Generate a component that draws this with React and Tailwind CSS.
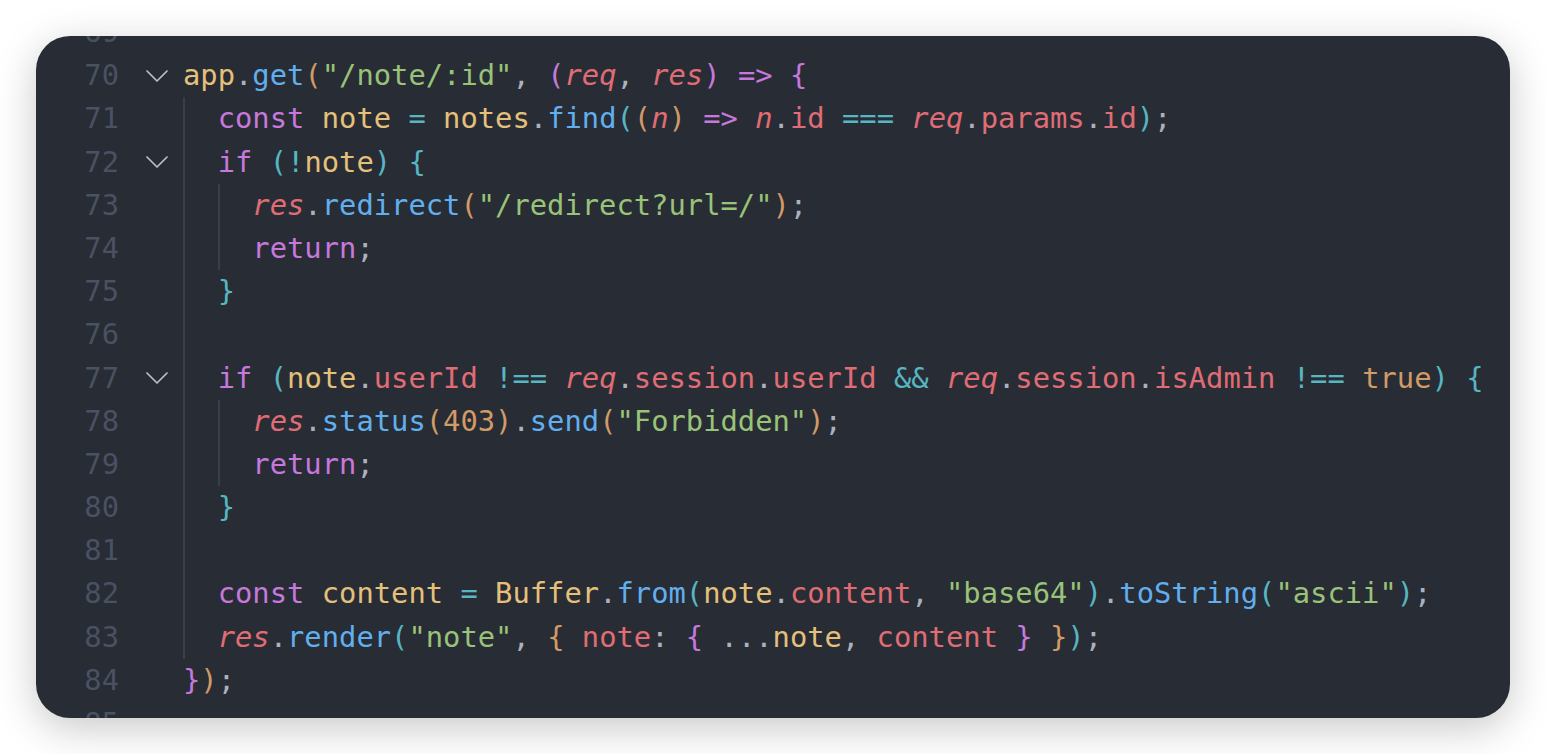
const C = {
    y: "text-[#e5c07b]",
    b: "text-[#61afef]",
    g: "text-[#98c379]",
    r: "text-[#e06c75]",
    p: "text-[#c678dd]",
    c: "text-[#56b6c2]",
    o: "text-[#d19a66]",
    w: "text-[#abb2bf]",
    i: "text-[#e06c75] italic",
};

const S = [" ", "w"];

const lines = [
    { n: 69, level: 0, tokens: [] },
    {
        n: 70,
        fold: true,
        level: 0,
        tokens: [
            ["app", "y"], [".", "w"], ["get", "b"], ["(", "o"], ['"/note/:id"', "g"], [", ", "w"],
            ["(", "p"], ["req", "i"], [", ", "w"], ["res", "i"], [")", "p"], S, ["=>", "p"], S, ["{", "p"],
        ],
    },
    {
        n: 71,
        level: 1,
        tokens: [
            ["const", "p"], S, ["note", "y"], S, ["=", "c"], S, ["notes", "y"], [".", "w"], ["find", "b"],
            ["(", "c"], ["(", "o"], ["n", "i"], [")", "o"], S, ["=>", "p"], S, ["n", "i"], [".", "w"],
            ["id", "r"], S, ["===", "c"], S, ["req", "i"], [".", "w"], ["params", "r"], [".", "w"],
            ["id", "r"], [")", "c"], [";", "w"],
        ],
    },
    {
        n: 72,
        fold: true,
        level: 1,
        tokens: [["if", "p"], S, ["(", "c"], ["!", "c"], ["note", "y"], [")", "c"], S, ["{", "c"]],
    },
    {
        n: 73,
        level: 2,
        tokens: [["res", "i"], [".", "w"], ["redirect", "b"], ["(", "o"], ['"/redirect?url=/"', "g"], [")", "o"], [";", "w"]],
    },
    { n: 74, level: 2, tokens: [["return", "p"], [";", "w"]] },
    { n: 75, level: 1, tokens: [["}", "c"]] },
    { n: 76, level: 1, tokens: [] },
    {
        n: 77,
        fold: true,
        level: 1,
        tokens: [
            ["if", "p"], S, ["(", "c"], ["note", "y"], [".", "w"], ["userId", "r"], S, ["!==", "c"], S,
            ["req", "i"], [".", "w"], ["session", "r"], [".", "w"], ["userId", "r"], S, ["&&", "c"], S,
            ["req", "i"], [".", "w"], ["session", "r"], [".", "w"], ["isAdmin", "r"], S, ["!==", "c"], S,
            ["true", "o"], [")", "c"], S, ["{", "c"],
        ],
    },
    {
        n: 78,
        level: 2,
        tokens: [
            ["res", "i"], [".", "w"], ["status", "b"], ["(", "o"], ["403", "o"], [")", "o"], [".", "w"],
            ["send", "b"], ["(", "o"], ['"Forbidden"', "g"], [")", "o"], [";", "w"],
        ],
    },
    { n: 79, level: 2, tokens: [["return", "p"], [";", "w"]] },
    { n: 80, level: 1, tokens: [["}", "c"]] },
    { n: 81, level: 1, tokens: [] },
    {
        n: 82,
        level: 1,
        tokens: [
            ["const", "p"], S, ["content", "y"], S, ["=", "c"], S, ["Buffer", "y"], [".", "w"], ["from", "b"],
            ["(", "c"], ["note", "y"], [".", "w"], ["content", "r"], [", ", "w"], ['"base64"', "g"], [")", "c"],
            [".", "w"], ["toString", "b"], ["(", "c"], ['"ascii"', "g"], [")", "c"], [";", "w"],
        ],
    },
    {
        n: 83,
        level: 1,
        tokens: [
            ["res", "i"], [".", "w"], ["render", "b"], ["(", "c"], ['"note"', "g"], [", ", "w"], ["{", "o"], S,
            ["note", "r"], [":", "w"], S, ["{", "p"], S, ["...", "w"], ["note", "y"], [", ", "w"],
            ["content", "r"], S, ["}", "p"], S, ["}", "o"], [")", "c"], [";", "w"],
        ],
    },
    { n: 84, level: 0, tokens: [["}", "p"], [")", "o"], [";", "w"]] },
    { n: 85, level: 0, tokens: [] },
];

const Chevron = () => (
    <svg width="24" height="14" viewBox="0 0 24 14" fill="none">
        <polyline
            points="2,2 12,12 22,2"
            stroke="#b9bec7"
            strokeWidth="1.7"
            strokeLinecap="round"
            strokeLinejoin="round"
        />
    </svg>
);

const CodeLine = ({ line }) => (
    <div className="flex h-[43.2px] leading-[43.2px]">
        <div className="w-[83px] shrink-0 text-right text-[#495162]">{line.n}</div>
        <div className="w-[64px] shrink-0 flex items-center pl-[26px]">
            {line.fold && <Chevron />}
        </div>
        <div className="flex flex-1 whitespace-pre">
            {Array.from({ length: line.level }).map((_, k) => (
                <span key={k} className="w-[2ch] shrink-0 self-stretch border-l-2 border-[#3a3e48]" />
            ))}
            <span>
                {line.tokens.map(([text, color], k) => (
                    <span key={k} className={C[color]}>
                        {text}
                    </span>
                ))}
            </span>
        </div>
    </div>
);

export default function App() {
    return (
        <div className="min-h-screen bg-white p-[36px]">
            <div
                className="h-[682px] overflow-hidden rounded-[34px] bg-[#282c34] shadow-[0_10px_40px_rgba(0,0,0,0.22)] text-[28.8px]"
                style={{ fontFamily: '"DejaVu Sans Mono", "Liberation Mono", monospace' }}
            >
                <div className="-mt-[25px] flex flex-col">
                    {lines.map((line) => (
                        <CodeLine key={line.n} line={line} />
                    ))}
                </div>
            </div>
        </div>
    );
}
